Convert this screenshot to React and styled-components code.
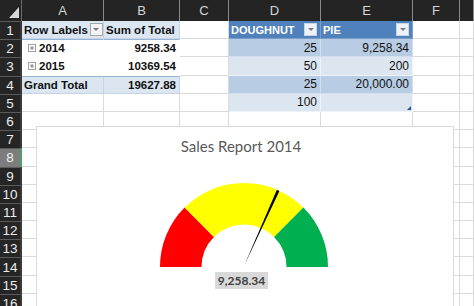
import React from "react";
import styled, { createGlobalStyle } from "styled-components";

const GlobalStyle = createGlobalStyle`
  html, body {
    margin: 0;
    padding: 0;
    background: #ffffff;
    overflow: hidden;
  }
  body {
    font-family: "Liberation Sans", Arial, sans-serif;
  }
`;

const Sheet = styled.div`
  position: relative;
  width: 474px;
  height: 306px;
  overflow: hidden;
  display: grid;
  grid-template-columns: 22px 82px 76px 49px 92px 92px 47px 1fr;
  grid-template-rows: 21px repeat(16, 18.2px);
`;

const Corner = styled.div`
  background: #242424;
  border-right: 1px solid #6b6b6b;
  position: relative;
  &::after {
    content: "";
    position: absolute;
    right: 2px;
    bottom: 3px;
    border-style: solid;
    border-width: 0 0 11px 10px;
    border-color: transparent transparent #d8d8d8 transparent;
  }
`;

const ColHead = styled.div`
  background: #242424;
  color: #d6d6d6;
  border-right: 1px solid #8a8a8a;
  font-size: 13px;
  display: flex;
  align-items: center;
  justify-content: center;
  box-sizing: border-box;
`;

const RowHead = styled.div`
  background: ${({ $active }) => ($active ? "#7d7d7d" : "#252525")};
  color: ${({ $active }) => ($active ? "#f2f2f2" : "#ececec")};
  border-top: 1px solid #5a5a5a;
  border-right: 2px solid ${({ $active }) => ($active ? "#4aa36a" : "#3a3a3a")};
  font-size: 13.5px;
  display: flex;
  align-items: center;
  justify-content: center;
  box-sizing: border-box;
`;

const Cell = styled.div`
  background: ${({ $bg }) => $bg || "#ffffff"};
  color: ${({ $fg }) => $fg || "#111111"};
  font-weight: ${({ $bold }) => ($bold ? 700 : 400)};
  font-size: ${({ $size }) => $size || 11.5}px;
  border-right: 1px solid ${({ $line }) => $line || "#dadada"};
  border-bottom: 1px solid ${({ $line }) => $line || "#dadada"};
  border-top: ${({ $top }) => ($top ? `1px solid ${$top}` : "none")};
  display: flex;
  align-items: center;
  justify-content: ${({ $align }) => ($align === "right" ? "flex-end" : "flex-start")};
  padding: 0 3px 0 2px;
  gap: 2px;
  box-sizing: border-box;
  white-space: nowrap;
  position: relative;
  overflow: hidden;
`;

const DropBtn = styled.span`
  margin-left: auto;
  width: 13px;
  height: 13px;
  flex-shrink: 0;
  box-sizing: border-box;
  border: 1px solid ${({ $light }) => ($light ? "#c9d5e6" : "#a8a8a8")};
  background: ${({ $light }) => ($light ? "#eef2f8" : "#f4f4f4")};
  display: flex;
  align-items: center;
  justify-content: center;
  &::after {
    content: "";
    border-style: solid;
    border-width: 3px 3px 0 3px;
    border-color: #7a7a7a transparent transparent transparent;
  }
`;

const Expand = styled.span`
  width: 6px;
  height: 6px;
  border: 1px solid #a0a0a0;
  display: inline-flex;
  align-items: center;
  justify-content: center;
  margin: 0 1px 0 4px;
`;

const Handle = styled.span`
  position: absolute;
  right: 1px;
  bottom: 1px;
  border-style: solid;
  border-width: 0 0 4px 4px;
  border-color: transparent transparent #2f4f86 transparent;
`;

const Chart = styled.div`
  position: absolute;
  left: 36px;
  top: 126px;
  width: 418px;
  height: 200px;
  box-sizing: border-box;
  background: #ffffff;
  border: 1px solid #d9d9d9;
  display: flex;
  flex-direction: column;
  align-items: center;
  padding-top: 10px;
`;

const ChartTitle = styled.div`
  font-family: Lato, "Open Sans", sans-serif;
  font-size: 15px;
  line-height: 18px;
  color: #595959;
  margin-left: -8px;
`;

const Gauge = styled.svg`
  margin-top: 27px;
  margin-left: -2px;
  display: block;
`;

const ValueLabel = styled.div`
  margin-top: 3px;
  margin-left: -7px;
  background: #d9d9d9;
  color: #404040;
  font-family: Lato, "Open Sans", sans-serif;
  font-weight: 700;
  font-size: 12px;
  line-height: 17px;
  padding: 0 3px;
`;

const PIVOT_HEAD = { $bg: "#dce6f1", $bold: true, $line: "#c5d5e8" };
const PIVOT_ROW = { $bold: true, $line: "#ffffff" };
const PIVOT_TOTAL = { $bg: "#dce6f1", $bold: true, $line: "#c5d5e8", $top: "#95b3d7" };
const TBL_HEAD = { $bg: "#4f81bd", $fg: "#ffffff", $bold: true, $line: "#7a9dc9", $size: 11 };
const BAND_DARK = { $bg: "#b8cce4", $line: "#d3dfee", $size: 12 };
const BAND_LIGHT = { $bg: "#dce6f1", $line: "#eef3f9", $size: 12 };

const cols = ["A", "B", "C", "D", "E", "F", ""];

const ExpandIcon = () => (
  <Expand>
    <svg width="4" height="4" viewBox="0 0 4 4">
      <path d="M0 2H4M2 0V4" stroke="#7a7a7a" strokeWidth="1" />
    </svg>
  </Expand>
);

const rows = {
  1: [
    { ...PIVOT_HEAD, content: <>Row Labels<DropBtn /></> },
    { ...PIVOT_HEAD, content: "Sum of Total" },
    {},
    { ...TBL_HEAD, content: <>DOUGHNUT<DropBtn $light /></> },
    { ...TBL_HEAD, content: <>PIE<DropBtn $light /></> },
  ],
  2: [
    { ...PIVOT_ROW, $top: "#95b3d7", content: <><ExpandIcon />2014</> },
    { ...PIVOT_ROW, $top: "#95b3d7", $align: "right", content: "9258.34" },
    {},
    { ...BAND_DARK, $align: "right", content: "25" },
    { ...BAND_DARK, $align: "right", content: "9,258.34" },
  ],
  3: [
    { ...PIVOT_ROW, content: <><ExpandIcon />2015</> },
    { ...PIVOT_ROW, $align: "right", content: "10369.54" },
    {},
    { ...BAND_LIGHT, $align: "right", content: "50" },
    { ...BAND_LIGHT, $align: "right", content: "200" },
  ],
  4: [
    { ...PIVOT_TOTAL, content: "Grand Total" },
    { ...PIVOT_TOTAL, $align: "right", content: "19627.88" },
    {},
    { ...BAND_DARK, $align: "right", content: "25" },
    { ...BAND_DARK, $align: "right", content: "20,000.00" },
  ],
  5: [
    {},
    {},
    {},
    { ...BAND_LIGHT, $align: "right", content: "100" },
    { ...BAND_LIGHT, content: <Handle /> },
  ],
};

const App = () => {
  const rowNums = Array.from({ length: 16 }, (_, i) => i + 1);

  return (
    <>
      <GlobalStyle />
      <Sheet>
        <Corner />
        {cols.map((c, i) => (
          <ColHead key={i}>{c}</ColHead>
        ))}
        {rowNums.map((r) => (
          <React.Fragment key={r}>
            <RowHead $active={r === 8}>{r}</RowHead>
            {cols.map((_, ci) => {
              const cell = (rows[r] && rows[r][ci]) || {};
              const { content, ...style } = cell;
              return (
                <Cell key={ci} {...style}>
                  {content}
                </Cell>
              );
            })}
          </React.Fragment>
        ))}

        <Chart>
          <ChartTitle>Sales Report 2014</ChartTitle>
          <Gauge width="172" height="87" viewBox="0 0 172 87">
            <path
              d="M2 85 A84 84 0 0 1 26.6 25.6 L55.95 54.95 A42.5 42.5 0 0 0 43.5 85 Z"
              fill="#ff0000"
            />
            <path
              d="M26.6 25.6 A84 84 0 0 1 145.4 25.6 L116.05 54.95 A42.5 42.5 0 0 0 55.95 54.95 Z"
              fill="#ffff00"
            />
            <path
              d="M145.4 25.6 A84 84 0 0 1 170 85 L128.5 85 A42.5 42.5 0 0 0 116.05 54.95 Z"
              fill="#00b050"
            />
            <polygon points="86,84 121.4,8.9 118.9,7.8" fill="#000000" />
          </Gauge>
          <ValueLabel>9,258.34</ValueLabel>
        </Chart>
      </Sheet>
    </>
  );
};

export default App;
